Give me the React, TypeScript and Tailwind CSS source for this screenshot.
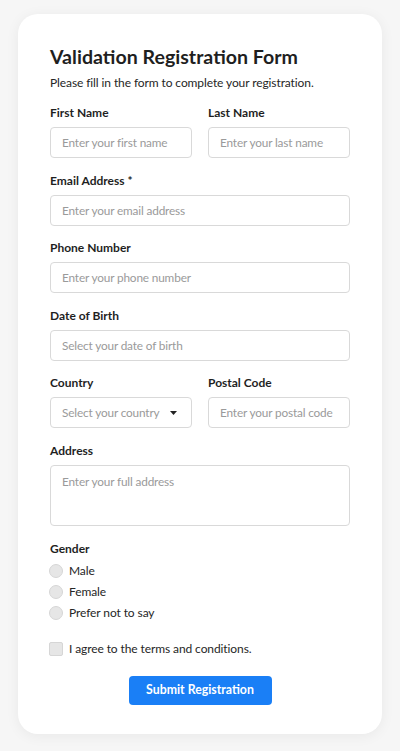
import React, { useState } from 'react'

const font = { fontFamily: 'Lato, "Noto Sans", sans-serif' }

function Label({ children }: { children: React.ReactNode }) {
  return <label className="block text-[12px] leading-[18px] font-bold text-[#1f1f1f] mb-[5px]">{children}</label>
}

const inputCls =
  'w-full h-[31px] rounded-[4px] border border-[#d9d9d9] bg-white px-[11px] text-[11.8px] tracking-[-0.15px] text-[#333] placeholder:text-[#9a9a9a] outline-none'

function Field({ label, placeholder, type = 'text' }: { label: string; placeholder: string; type?: string }) {
  return (
    <div className="flex-1 min-w-0">
      <Label>{label}</Label>
      <input type={type} placeholder={placeholder} className={inputCls} />
    </div>
  )
}

export default function App() {
  const [gender, setGender] = useState('')
  const [agree, setAgree] = useState(false)

  return (
    <div className="min-h-[751px] bg-[#f6f6f6] px-[18px] pt-[14px] pb-[16px]" style={font}>
      <div className="rounded-[20px] bg-white px-[32px] pt-[31px] pb-[29px] shadow-[0_2px_14px_rgba(0,0,0,0.06)]">
        <h1 className="text-[19.6px] leading-[24px] font-bold text-[#1f1f1f]">Validation Registration Form</h1>
        <p className="mt-[4px] text-[12px] leading-[20px] tracking-[-0.1px] text-[#262626]">
          Please fill in the form to complete your registration.
        </p>

        <div className="mt-[11px] flex flex-col gap-[13.6px]">
          <div className="flex gap-[16px]">
            <Field label="First Name" placeholder="Enter your first name" />
            <Field label="Last Name" placeholder="Enter your last name" />
          </div>
          <Field label="Email Address *" placeholder="Enter your email address" type="email" />
          <Field label="Phone Number" placeholder="Enter your phone number" type="tel" />
          <Field label="Date of Birth" placeholder="Select your date of birth" />
          <div className="flex gap-[16px]">
            <div className="flex-1 min-w-0">
              <Label>Country</Label>
              <div className="flex h-[31px] items-center justify-between rounded-[4px] border border-[#d9d9d9] bg-white pl-[11px] pr-[14px] text-[11.8px] tracking-[-0.15px] text-[#9a9a9a]">
                <span className="whitespace-nowrap">Select your country</span>
                <svg width="7" height="4" viewBox="0 0 7 4" className="text-[#222]">
                  <path d="M0 0h7L3.5 4z" fill="currentColor" />
                </svg>
              </div>
            </div>
            <Field label="Postal Code" placeholder="Enter your postal code" />
          </div>
          <div>
            <Label>Address</Label>
            <textarea
              placeholder="Enter your full address"
              className="block w-full h-[61px] resize-none rounded-[4px] border border-[#d9d9d9] bg-white px-[11px] py-[7px] text-[11.8px] tracking-[-0.15px] text-[#333] placeholder:text-[#9a9a9a] outline-none"
            />
          </div>
          <div>
            <div className="text-[12px] leading-[18px] font-bold text-[#1f1f1f] mb-[3px]">Gender</div>
            {['Male', 'Female', 'Prefer not to say'].map((g) => (
              <label key={g} className="flex h-[21px] items-center gap-[6px] text-[12px] tracking-[-0.1px] text-[#262626]">
                <span
                  onClick={() => setGender(g)}
                  className="-ml-px h-[14px] w-[14px] rounded-full border border-[#d6d6d6] bg-[#e6e6e6]"
                />
                {g}
              </label>
            ))}
          </div>
        </div>

        <label className="mt-[14.5px] flex h-[21px] items-center gap-[6px] text-[12px] tracking-[-0.1px] text-[#262626]">
          <span
            onClick={() => setAgree(!agree)}
            className="-ml-px h-[14px] w-[14px] rounded-[2px] border border-[#d6d6d6] bg-[#e6e6e6]"
          />
          I agree to the terms and conditions.
        </label>

        <div className="mt-[17px] flex justify-center">
          <button className="h-[29px] w-[143px] rounded-[4px] bg-[#1a7ff6] text-[12.3px] font-bold text-white">
            Submit Registration
          </button>
        </div>
      </div>
    </div>
  )
}
